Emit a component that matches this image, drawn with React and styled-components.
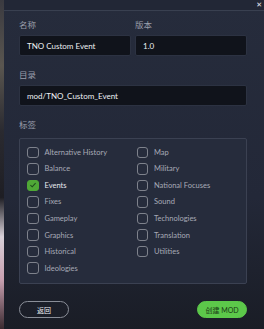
import React from 'react';
import styled, { createGlobalStyle } from 'styled-components';

const GlobalStyle = createGlobalStyle`
  html, body {
    margin: 0;
    padding: 0;
    background: #14161c;
  }
  body {
    font-family: Lato, "Noto Sans CJK SC", sans-serif;
  }
`;

const leftTags = ['Alternative History', 'Balance', 'Events', 'Fixes', 'Gameplay', 'Graphics', 'Historical', 'Ideologies'];
const rightTags = ['Map', 'Military', 'National Focuses', 'Sound', 'Technologies', 'Translation', 'Utilities'];
const checked = ['Events'];

const App = () => {
  return (
    <>
      <GlobalStyle />
      <Screen>
        <Backdrop />
        <Dialog>
          <Header>
            <Close>✕</Close>
          </Header>
          <Body>
            <Row>
              <Field>
                <Label>名称</Label>
                <Input>TNO Custom Event</Input>
              </Field>
              <Field>
                <Label>版本</Label>
                <Input>1.0</Input>
              </Field>
            </Row>
            <Field>
              <Label>目录</Label>
              <Input>mod/TNO_Custom_Event</Input>
            </Field>
            <Field>
              <Label $gap={7}>标签</Label>
              <TagBox>
                <TagColumn>
                  {leftTags.map(t => (
                    <Tag key={t}>
                      <Check $on={checked.includes(t)}>
                        {checked.includes(t) && (
                          <svg width="8" height="8" viewBox="0 0 8 8">
                            <path d="M1.4 4.2 L3.2 5.8 L6.6 2.2" fill="none" stroke="#1d4a1e" strokeWidth="1.1" />
                          </svg>
                        )}
                      </Check>
                      <TagText $on={checked.includes(t)}>{t}</TagText>
                    </Tag>
                  ))}
                </TagColumn>
                <TagColumn>
                  {rightTags.map(t => (
                    <Tag key={t}>
                      <Check />
                      <TagText>{t}</TagText>
                    </Tag>
                  ))}
                </TagColumn>
              </TagBox>
            </Field>
          </Body>
          <Footer>
            <Button>返回</Button>
            <Button $primary>创建 MOD</Button>
          </Footer>
        </Dialog>
      </Screen>
    </>
  );
};

export default App;

const Screen = styled.div`
  display: flex;
  width: 264px;
  height: 329px;
  overflow: hidden;
`;

const Backdrop = styled.div`
  width: 4px;
  flex-shrink: 0;
  background: linear-gradient(180deg, #3a3a40 0%, #5a5650 20%, #2a2a30 40%, #1e1e24 60%, #d8d0d8 72%, #c8a0b0 85%, #3a2a30 100%);
`;

const Dialog = styled.div`
  flex: 1;
  display: flex;
  flex-direction: column;
  background: linear-gradient(180deg, #262c3c 0%, #232838 60%, #1a1d26 100%);
`;

const Header = styled.div`
  height: 10px;
  display: flex;
  justify-content: flex-end;
  align-items: flex-start;
  border-bottom: 1px solid #394050;
  background: #222736;
`;

const Close = styled.span`
  color: #e8e8ee;
  font-size: 7px;
  font-family: "DejaVu Sans", sans-serif;
  font-weight: bold;
  line-height: 8px;
  margin: 1px 2px 0 0;
`;

const Body = styled.div`
  display: flex;
  flex-direction: column;
  gap: 13px;
  padding: 8px 17px 0 15px;
`;

const Row = styled.div`
  display: flex;
  gap: 4px;
`;

const Field = styled.div`
  flex: 1;
  display: flex;
  flex-direction: column;
`;

const Label = styled.div`
  color: #9a9eaa;
  font-size: 8.5px;
  line-height: 12px;
  height: 12px;
  margin-bottom: ${p => p.$gap || 4}px;
`;

const Input = styled.div`
  height: 21px;
  box-sizing: border-box;
  background: #10131b;
  border: 1px solid #2c3242;
  border-radius: 2px;
  color: #eef0f4;
  font-size: 8px;
  display: flex;
  align-items: center;
  padding-left: 7px;
`;

const TagBox = styled.div`
  display: flex;
  box-sizing: border-box;
  height: 146px;
  background: #262c3c;
  border: 1px solid #3b4152;
  border-radius: 2px;
  padding: 5px 0 0 7px;
`;

const TagColumn = styled.div`
  flex: 1;
  display: flex;
  flex-direction: column;
`;

const Tag = styled.div`
  height: 16.57px;
  display: flex;
  align-items: center;
  gap: 6px;
`;

const Check = styled.div`
  width: 11.5px;
  height: 11.5px;
  box-sizing: border-box;
  border: 1.5px solid ${p => (p.$on ? '#4fa836' : '#7e828c')};
  background: ${p => (p.$on ? '#4fa836' : 'transparent')};
  border-radius: 3px;
  display: flex;
  align-items: center;
  justify-content: center;
`;

const TagText = styled.span`
  color: ${p => (p.$on ? '#e8eaf0' : '#a6aab6')};
  font-size: 7.5px;
`;

const Footer = styled.div`
  margin-top: auto;
  display: flex;
  justify-content: space-between;
  padding: 0 17px 11px 15px;
`;

const Button = styled.div`
  width: 50px;
  height: 17px;
  box-sizing: border-box;
  border-radius: 9px;
  display: flex;
  align-items: center;
  justify-content: center;
  font-size: 7px;
  border: 1px solid ${p => (p.$primary ? '#5cc84a' : '#8a8e98')};
  background: ${p => (p.$primary ? '#5cc84a' : 'transparent')};
  color: ${p => (p.$primary ? '#1a3a16' : '#f0f0f4')};
`;
